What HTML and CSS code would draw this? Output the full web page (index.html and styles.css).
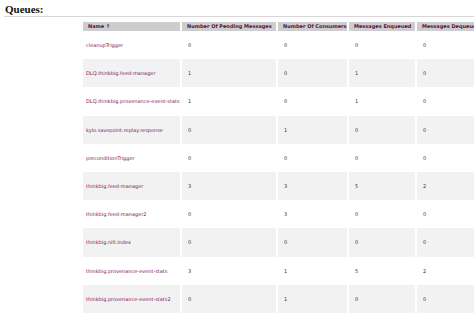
FILE: index.html
```html
<!DOCTYPE html>
<html lang="en">
<head>
    <meta charset="UTF-8">
    <title>Queues</title>
    <link rel="stylesheet" href="styles.css">
</head>
<body>
    <h1>Queues:</h1>
    <hr>
    <div class="queues">
        <table class="queue-table">
            <colgroup>
                <col class="col-name">
                <col class="col-pending">
                <col class="col-consumers">
                <col class="col-enqueued">
                <col class="col-dequeued">
            </colgroup>
            <thead>
                <tr>
                    <th>Name &uarr;</th>
                    <th>Number Of Pending Messages</th>
                    <th>Number Of Consumers</th>
                    <th>Messages Enqueued</th>
                    <th>Messages Dequeued</th>
                </tr>
            </thead>
            <tbody>
                <tr><td><a href="#">cleanupTrigger</a></td><td>0</td><td>0</td><td>0</td><td>0</td></tr>
                <tr><td><a href="#">DLQ.thinkbig.feed-manager</a></td><td>1</td><td>0</td><td>1</td><td>0</td></tr>
                <tr><td><a href="#">DLQ.thinkbig.provenance-event-stats</a></td><td>1</td><td>0</td><td>1</td><td>0</td></tr>
                <tr><td><a href="#">kylo.savepoint.replay.response</a></td><td>0</td><td>1</td><td>0</td><td>0</td></tr>
                <tr><td><a href="#">preconditionTrigger</a></td><td>0</td><td>0</td><td>0</td><td>0</td></tr>
                <tr><td><a href="#">thinkbig.feed-manager</a></td><td>3</td><td>3</td><td>5</td><td>2</td></tr>
                <tr><td><a href="#">thinkbig.feed-manager2</a></td><td>0</td><td>3</td><td>0</td><td>0</td></tr>
                <tr><td><a href="#">thinkbig.nifi.index</a></td><td>0</td><td>0</td><td>0</td><td>0</td></tr>
                <tr><td><a href="#">thinkbig.provenance-event-stats</a></td><td>3</td><td>1</td><td>5</td><td>2</td></tr>
                <tr><td><a href="#">thinkbig.provenance-event-stats2</a></td><td>0</td><td>1</td><td>0</td><td>0</td></tr>
            </tbody>
        </table>
    </div>
</body>
</html>
```

FILE: styles.css
```css
html, body {
    margin: 0;
    overflow: hidden;
    background: #fff;
}
body {
    font-family: "DejaVu Sans", Verdana, sans-serif;
    color: #333;
}
h1 {
    font-family: "Liberation Serif", "Times New Roman", serif;
    font-size: 11px;
    font-weight: bold;
    color: #111;
    margin: 0;
    padding: 4px 0 0 5px;
    line-height: 11px;
}
hr {
    border: none;
    border-top: 1px solid #d6d6d6;
    margin: 1px 0 0 4px;
}
.queues {
    padding: 5px 0 0 81px;
}
.queue-table {
    table-layout: fixed;
    width: 418px;
    border-collapse: separate;
    border-spacing: 2px 0;
    font-size: 5px;
}
.col-name { width: 97px; }
.col-pending { width: 94px; }
.col-consumers { width: 69px; }
.col-enqueued { width: 66px; }
.col-dequeued { width: 80px; }
.queue-table th {
    background: #cdcdcd;
    color: #5a0f3c;
    font-weight: bold;
    text-align: left;
    height: 9px;
    padding: 0 0 0 5px;
    white-space: nowrap;
    overflow: hidden;
    line-height: 9px;
}
.queue-table td {
    height: 28.2px;
    padding: 0 0 0 6px;
    color: #333;
    white-space: nowrap;
}
.queue-table td:first-child {
    padding-left: 3px;
}
.queue-table tbody tr:nth-child(even) td {
    background: #f2f2f2;
}
.queue-table a {
    color: #7d2362;
    text-decoration: none;
}
```
